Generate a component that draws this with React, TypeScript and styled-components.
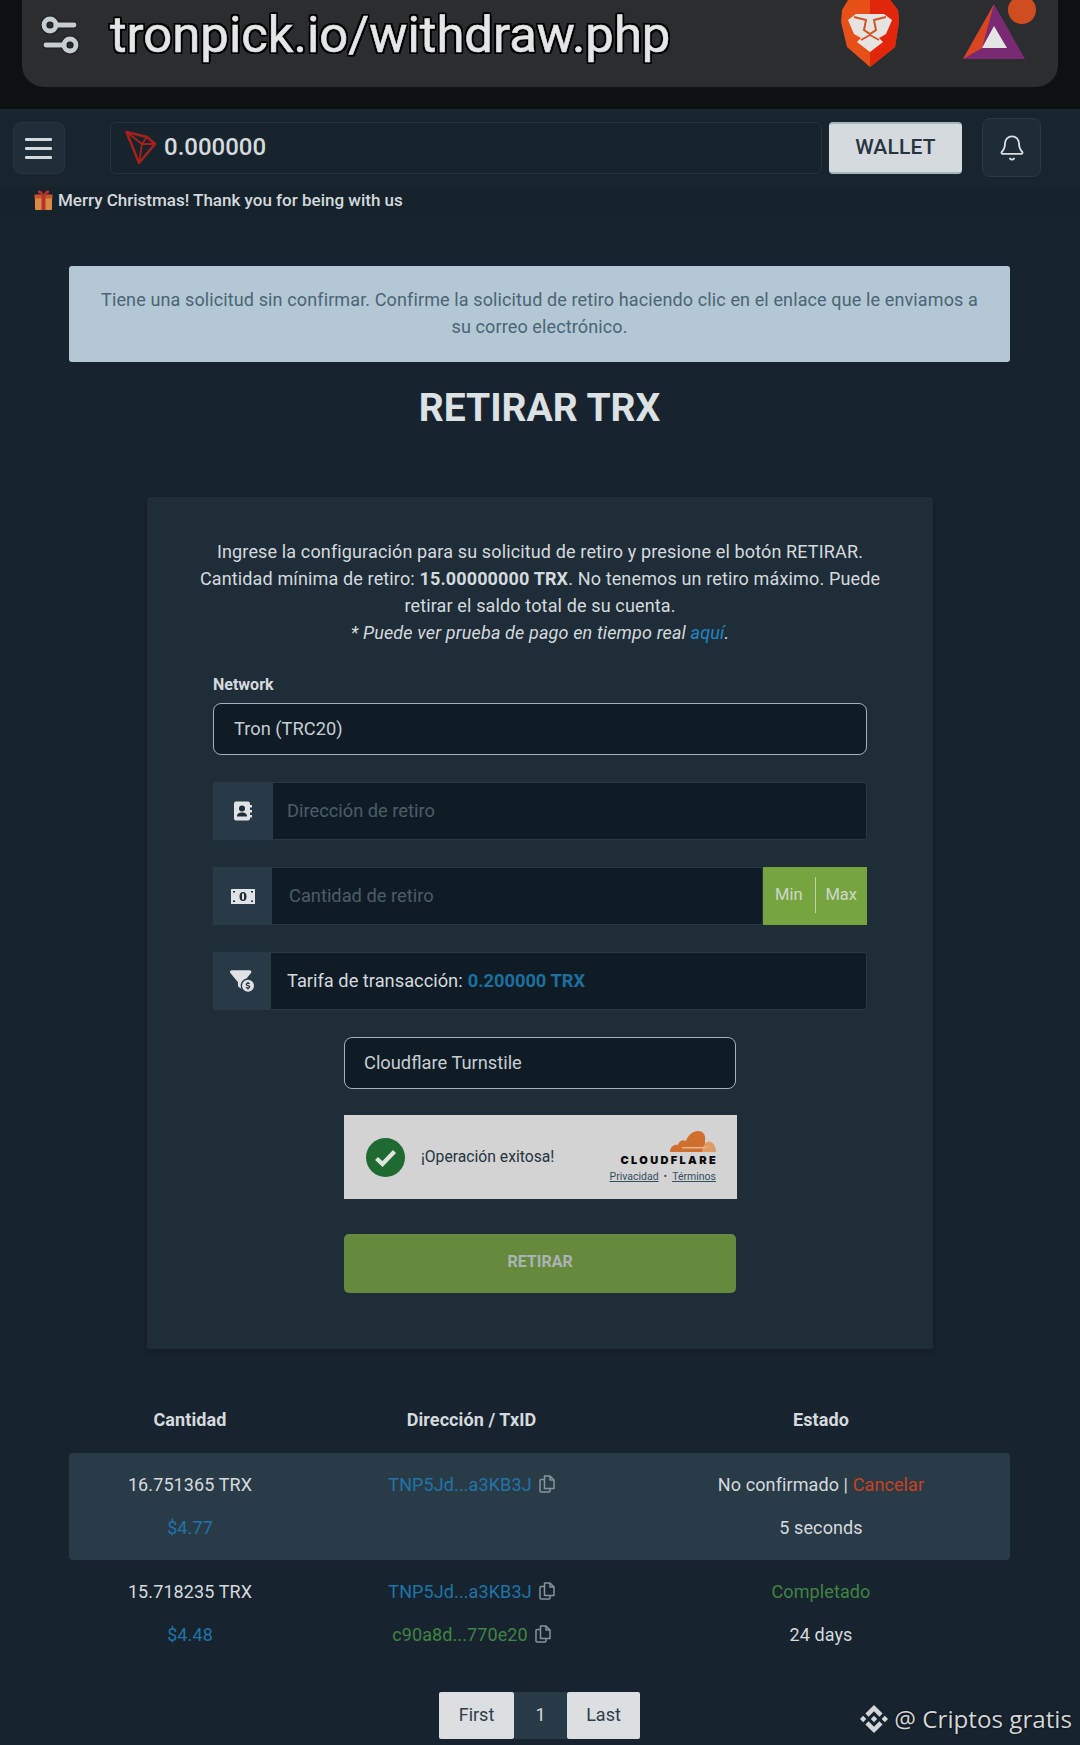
import React from "react";
import styled, { createGlobalStyle } from "styled-components";
import { Bell, Settings2 } from "lucide-react";
import { FaFilterCircleDollar } from "react-icons/fa6";
import { SiBinance } from "react-icons/si";

const Global = createGlobalStyle`
  html, body { margin: 0; padding: 0; background: #17232e; }
  body { font-family: Roboto, "Liberation Sans", sans-serif; color: #d7dde0; width: 1080px; height: 1745px; overflow: hidden; }
  * { box-sizing: border-box; }
`;

const Page = styled.div`
  position: relative;
  width: 1080px;
  height: 1745px;
  overflow: hidden;
  background: #17232e;
`;

const BrowserBar = styled.header`
  height: 109px;
  background: #0e1111;
  padding: 0 22px 22px;
`;
const UrlPill = styled.div`
  height: 87px;
  background: #2c2d30;
  border-radius: 0 0 22px 22px;
  display: flex;
  align-items: center;
  padding: 0 16px 18px 14px;
`;
const UrlSettings = styled.span`
  display: flex;
  color: #c6ced2;
  margin-right: 26px;
  filter: drop-shadow(0 0 1px #000);
`;
const UrlText = styled.div`
  font-size: 50.8px;
  color: #e3e5e6;
  -webkit-text-stroke: 0.6px #e3e5e6;
  text-shadow: -2px 0 #000, 2px 0 #000, 0 -2px #000, 0 2px #000, -2px -2px #000, 2px 2px #000, -2px 2px #000, 2px -2px #000;
  flex: 1;
  line-height: 60px;
`;
const BraveLogo = styled.svg`
  width: 60px;
  height: 68px;
  align-self: flex-start;
`;
const BatLogo = styled.svg`
  width: 76px;
  height: 62px;
  margin-left: 63px;
  margin-right: 3px;
  align-self: flex-start;
`;

const NavBar = styled.nav`
  height: 78px;
  display: flex;
  align-items: flex-start;
  padding: 13px 39px 0 13px;
  background: #18252f;
`;
const HamburgerButton = styled.button`
  width: 52px;
  height: 52px;
  border-radius: 8px;
  border: 1px solid #25343f;
  background: #1f2e39;
  padding: 0 2px 0 0;
  display: flex;
  flex-direction: column;
  justify-content: center;
  align-items: center;
  gap: 6px;
`;
const HamburgerLine = styled.span`
  display: block;
  width: 27px;
  height: 3px;
  border-radius: 1px;
  background: #d3d9dc;
`;
const BalanceBox = styled.div`
  width: 712px;
  height: 52px;
  margin-left: 45px;
  border: 1px solid #223240;
  border-radius: 6px;
  background: #17242e;
  display: flex;
  align-items: center;
  padding: 0 0 2px 14px;
  gap: 7px;
  font-size: 24px;
  font-weight: 500;
  color: #d5dade;
`;
const WalletButton = styled.button`
  width: 133px;
  height: 52px;
  margin-left: 7px;
  border: 0;
  border-top: 2px solid #a9b5bc;
  border-bottom: 2px solid #a9b5bc;
  border-radius: 4px;
  background: #d4dade;
  color: #26343f;
  font: 500 21px Roboto, sans-serif;
  letter-spacing: 0.2px;
  padding: 0 0 2px;
`;
const BellButton = styled.button`
  width: 59px;
  height: 59px;
  margin: -4px 0 0 20px;
  border: 1px solid #2a3a45;
  border-radius: 8px;
  background: #1e2c37;
  color: #d9dee1;
  display: flex;
  align-items: center;
  justify-content: center;
  padding: 0;
`;

const Ticker = styled.div`
  height: 30px;
  padding: 0 0 5px 34px;
  display: flex;
  align-items: center;
  gap: 5px;
  font-size: 17px;
  font-weight: 500;
  color: #d3d9dc;
  background: #16232d;
`;

const Main = styled.main`
  padding: 49px 70px 0 69px;
  display: flex;
  flex-direction: column;
`;
const Alert = styled.div`
  height: 96px;
  background: #b3c8d4;
  border-radius: 3px;
  color: #4a6575;
  font-size: 18px;
  line-height: 27px;
  text-align: center;
  padding: 20px 24px 0;
  letter-spacing: 0.12px;
`;
const Title = styled.h1`
  margin: 23px 0 0;
  font-size: 39px;
  line-height: 46px;
  font-weight: 700;
  text-align: center;
  color: #dce1e3;
`;
const Card = styled.section`
  width: 786px;
  height: 852px;
  margin: 66px 0 0 78px;
  background: #1e2d38;
  border-radius: 3px;
  box-shadow: 0 2px 6px rgba(0, 0, 0, 0.2);
  padding: 41px 66px 0;
  display: flex;
  flex-direction: column;
`;
const Intro = styled.p`
  margin: 0 -18px;
  font-size: 18px;
  line-height: 27px;
  letter-spacing: 0.14px;
  text-align: center;
  color: #d5dade;
  strong { font-weight: 700; }
  em { font-style: italic; }
  a { color: #1f86c0; text-decoration: none; }
`;
const FieldLabel = styled.label`
  margin-top: 27px;
  font-size: 16px;
  line-height: 24px;
  font-weight: 700;
  color: #d5dade;
`;
const SelectBox = styled.div<{ $narrow?: boolean }>`
  margin-top: ${(p) => (p.$narrow ? "0" : "6px")};
  width: ${(p) => (p.$narrow ? "392px" : "654px")};
  align-self: center;
  height: 52px;
  border: 1px solid #a7b2b8;
  border-radius: 8px;
  background: #0f1c26;
  display: flex;
  align-items: center;
  padding: 0 0 2px ${(p) => (p.$narrow ? "19px" : "20px")};
  font-size: 18.3px;
  color: #c6ced3;
`;
const InputGroup = styled.div`
  margin-top: 27px;
  height: 58px;
  display: flex;
`;
const Addon = styled.span<{ $w: number }>`
  flex: 0 0 ${(p) => p.$w}px;
  background: #293a47;
  display: flex;
  align-items: center;
  justify-content: center;
  color: #dfe3e5;
`;
const InputCell = styled.div<{ $pad: number }>`
  flex: 1;
  background: #0f1c26;
  border: 1px solid #263844;
  border-left: 0;
  border-radius: 0 3px 3px 0;
  display: flex;
  align-items: center;
  padding: 0 0 2px ${(p) => p.$pad}px;
  font-size: 18.3px;
  color: #4d5c66;
  strong { color: #1d6f9f; font-weight: 700; margin-left: 5px; }
`;
const FeeText = styled.span`
  color: #d5dade;
  display: flex;
`;
const MinMax = styled.div`
  flex: 0 0 104px;
  background: #76a540;
  display: flex;
  align-items: center;
  color: #cfd6cf;
  font-size: 16.5px;
  padding-bottom: 2px;
`;
const MinMaxItem = styled.span<{ $first?: boolean }>`
  flex: 1;
  text-align: center;
  line-height: 36px;
  border-right: ${(p) => (p.$first ? "1px solid #c2d0ae" : "0")};
`;
const NarrowBlock = styled.div<{ $gap: number }>`
  margin-top: ${(p) => p.$gap}px;
  width: 392px;
  align-self: center;
`;
const Turnstile = styled.div`
  width: 393px;
  height: 84px;
  background: #d3d3d3;
  display: flex;
  align-items: center;
  padding-left: 22px;
`;
const CheckCircle = styled.svg`
  width: 39px;
  height: 39px;
  flex: none;
`;
const TurnstileText = styled.span`
  margin: 0 0 2px 16px;
  font-size: 15.7px;
  color: #25343f;
`;
const CfBrand = styled.div`
  margin-left: auto;
  margin-right: 21px;
  display: flex;
  flex-direction: column;
  align-items: flex-end;
`;
const CfWord = styled.span`
  font: 900 11px Inter, "Liberation Sans", sans-serif;
  letter-spacing: 2.35px;
  margin-right: -2px;
  color: #0a0a0a;
  line-height: 14px;
`;
const CfLinks = styled.span`
  margin-top: 3px;
  font-size: 10.5px;
  line-height: 13px;
  color: #34505f;
  display: flex;
  gap: 5px;
  u { text-decoration: underline; }
`;
const SubmitButton = styled.button`
  width: 392px;
  height: 59px;
  border: 0;
  border-radius: 5px;
  background: #668a3d;
  color: #aab3b5;
  font: 700 16px Roboto, sans-serif;
  padding: 0 0 5px;
`;

const TableHead = styled.div`
  margin-top: 57px;
  display: grid;
  grid-template-columns: 242px 321px 378px;
  font-size: 18px;
  line-height: 28px;
  font-weight: 700;
  letter-spacing: 0.1px;
  text-align: center;
  color: #d5dade;
`;
const TableRow = styled.div<{ $shaded?: boolean }>`
  margin-top: ${(p) => (p.$shaded ? "19px" : "0")};
  height: 107px;
  display: grid;
  grid-template-columns: 242px 321px 378px;
  background: ${(p) => (p.$shaded ? "#2a3b48" : "transparent")};
  border-radius: 4px;
  text-align: center;
  font-size: 18px;
  letter-spacing: 0.1px;
`;
const Cell = styled.div`
  padding-top: 19px;
  display: flex;
  flex-direction: column;
  align-items: center;
  gap: 17px;
  & > * { line-height: 26px; height: 26px; }
`;
const Blue = styled.span`
  color: #1f74a8;
  display: inline-flex;
  align-items: center;
  gap: 7px;
`;
const Green = styled.span`
  color: #3f8543;
  display: inline-flex;
  align-items: center;
  gap: 7px;
`;
const Plain = styled.span`
  color: #d5dade;
`;
const Cancel = styled.span`
  color: #c9411f;
`;
const CopySvg = styled.svg`
  width: 16px;
  height: 18px;
  margin-top: -2px;
`;
const Pager = styled.div`
  margin: 25px 0 0 370px;
  width: 201px;
  height: 47px;
  display: flex;
  font-size: 18px;
`;
const PageItem = styled.span<{ $active?: boolean; $w: number }>`
  width: ${(p) => p.$w}px;
  display: flex;
  align-items: center;
  justify-content: center;
  padding-bottom: 2px;
  color: ${(p) => (p.$active ? "#d5dade" : "#2e3d48")};
  background: ${(p) => (p.$active ? "#293a47" : "#dbdfe2")};
  border-radius: ${(p) => (p.$active ? "0" : "2px")};
`;
const Watermark = styled.div`
  position: absolute;
  right: 8px;
  top: 1702px;
  display: flex;
  align-items: center;
  gap: 6px;
  font: 24.2px "Open Sans", "DejaVu Sans", sans-serif;
  color: #d3d7d9;
  text-shadow: 0 0 2px #000;
`;

const Tron = () => (
  <svg width="32" height="34" viewBox="0 0 32 34" fill="none" stroke="#a8201c" strokeWidth="2.4" strokeLinejoin="round">
    <path d="M1.5 2 L22 7 L30 14 L14 33 Z" />
    <path d="M1.5 2 L17 14 L14 33 M17 14 L30 14 M17 14 L22 7" strokeWidth="1.8" />
  </svg>
);

const Gift = () => (
  <svg width="19" height="20" viewBox="0 0 19 20">
    <rect x="1" y="6" width="17" height="14" rx="1" fill="#d98a44" />
    <rect x="0.5" y="4.5" width="18" height="4" fill="#c5572c" />
    <rect x="7.5" y="4" width="4" height="16" fill="#b8322a" />
    <path d="M9.5 4.5 C5 4.5 3 2.5 4 1 C5.5-.5 8.5 1.5 9.5 4.5 C10.5 1.5 13.5-.5 15 1 C16 2.5 14 4.5 9.5 4.5Z" fill="#b8322a" />
  </svg>
);

const Cloud = () => (
  <svg width="46" height="22" viewBox="0 0 46 22">
    <path d="M0 21 C0 15 5 13 8 14 C9 10 13 8 16 10 C18 4 23 0 28 0 C33 0 36 4 35 9 L35 21 Z" fill="#cf6f2e" />
    <path d="M32 21 C33 13 37 9 41 11 C44 12 46 17 46 21 Z" fill="#e09a63" />
    <path d="M12 16 L34 16 L41 15 L34 17.5 L12 17.5 Z" fill="#e5b48f" />
  </svg>
);

const CopyGlyph = () => (
  <CopySvg viewBox="0 0 16 18" fill="none" stroke="#87949c" strokeWidth="1.5" strokeLinejoin="round">
    <path d="M5.5 1 H11 L15 5 V13.5 H5.5 Z" />
    <path d="M11 1 V5 H15" />
    <path d="M5.5 4.5 H2 A1 1 0 0 0 1 5.5 V16 A1 1 0 0 0 2 17 H10 A1 1 0 0 0 11 16 V13.5" />
  </CopySvg>
);

const AddressBook = () => (
  <svg width="18" height="20" viewBox="0 0 18 20">
    <rect x="0" y="0.5" width="16" height="19" rx="2" fill="#dfe3e5" />
    <path d="M16 4 h2 v2.5 h-2z M16 9 h2 v2.5 h-2z M16 14 h2 v2.5 h-2z" fill="#dfe3e5" />
    <circle cx="8" cy="7.5" r="3" fill="#1e2d38" />
    <path d="M3 15.5 C3 12.5 5 11.5 8 11.5 C11 11.5 13 12.5 13 15.5 Z" fill="#1e2d38" />
  </svg>
);

const MoneyBill = () => (
  <svg width="24" height="15" viewBox="0 0 24 15">
    <rect x="0" y="0" width="24" height="15" rx="0.5" fill="#dfe3e5" />
    <ellipse cx="12" cy="7.5" rx="3.5" ry="4.5" fill="#1e2d38" />
    <rect x="11" y="4.5" width="2" height="6" fill="#dfe3e5" />
    <path d="M2 2 h2 v1.5 h-2z M20 2 h2 v1.5 h-2z M2 11.5 h2 v1.5 h-2z M20 11.5 h2 v1.5 h-2z" fill="#1e2d38" />
  </svg>
);

const SuccessMark = () => (
  <CheckCircle viewBox="0 0 39 39">
    <circle cx="19.5" cy="19.5" r="19.5" fill="#1f6a30" />
    <path d="M10.5 20.5 L16.5 26 L28.5 13.5" fill="none" stroke="#dfe6e0" strokeWidth="4.2" strokeLinejoin="miter" />
  </CheckCircle>
);

export default function App() {
  return (
    <Page>
      <Global />
      <BrowserBar>
        <UrlPill>
          <UrlSettings>
            <Settings2 size={48} strokeWidth={2.4} />
          </UrlSettings>
          <UrlText>tronpick.io/withdraw.php</UrlText>
          <BraveLogo viewBox="0 0 60 68">
            <path d="M8 0 L50 0 L58 10 L59 22 L55 47 L30 67 L7 47 L1 22 L2 10 Z" fill="#e8501a" />
            <path d="M30 0 L50 0 L58 10 L59 22 L55 47 L30 67 Z" fill="#e2260a" />
            <path d="M8 20 L16 14 L44 14 L52 20 L46 34 L39 38 L43 42 L30 52 L17 42 L21 38 L14 34 Z" fill="#e6e3e0" />
            <path d="M14 17 L26 20 L24 30 L30 34 L36 30 L34 20 L46 17" fill="none" stroke="#cf5525" strokeWidth="2" />
            <path d="M21 40 L30 35 L39 40" fill="none" stroke="#cf5525" strokeWidth="1.6" />
          </BraveLogo>
          <BatLogo viewBox="0 0 76 62">
            <path d="M31 4 L0 59 L62 59 Z" fill="#7a2a72" />
            <path d="M31 4 L0 59 L19 48 Z" fill="#d9451e" />
            <path d="M31 26 L44 48 L19 48 Z" fill="#e4e4e4" />
            <circle cx="59" cy="10" r="14" fill="#cf4d20" />
          </BatLogo>
        </UrlPill>
      </BrowserBar>

      <NavBar>
        <HamburgerButton aria-label="menu">
          <HamburgerLine />
          <HamburgerLine />
          <HamburgerLine />
        </HamburgerButton>
        <BalanceBox>
          <Tron />
          0.000000
        </BalanceBox>
        <WalletButton>WALLET</WalletButton>
        <BellButton aria-label="notifications">
          <Bell size={28} strokeWidth={1.6} />
        </BellButton>
      </NavBar>

      <Ticker>
        <Gift />
        Merry Christmas! Thank you for being with us
      </Ticker>

      <Main>
        <Alert>
          Tiene una solicitud sin confirmar. Confirme la solicitud de retiro haciendo clic en el enlace que le enviamos a su correo electrónico.
        </Alert>
        <Title>RETIRAR TRX</Title>
        <Card>
          <Intro>
            Ingrese la configuración para su solicitud de retiro y presione el botón RETIRAR.
            <br />
            Cantidad mínima de retiro: <strong>15.00000000 TRX</strong>. No tenemos un retiro máximo. Puede retirar el saldo total de su cuenta.
            <br />
            <em>
              * Puede ver prueba de pago en tiempo real <a href="#aqui">aquí</a>.
            </em>
          </Intro>
          <FieldLabel>Network</FieldLabel>
          <SelectBox>Tron (TRC20)</SelectBox>
          <InputGroup>
            <Addon $w={60}>
              <AddressBook />
            </Addon>
            <InputCell $pad={14}>Dirección de retiro</InputCell>
          </InputGroup>
          <InputGroup>
            <Addon $w={59}>
              <MoneyBill />
            </Addon>
            <InputCell $pad={17}>Cantidad de retiro</InputCell>
            <MinMax>
              <MinMaxItem $first>Min</MinMaxItem>
              <MinMaxItem>Max</MinMaxItem>
            </MinMax>
          </InputGroup>
          <InputGroup>
            <Addon $w={58}>
              <FaFilterCircleDollar size={24} />
            </Addon>
            <InputCell $pad={16}>
              <FeeText>
                Tarifa de transacción:<strong>0.200000 TRX</strong>
              </FeeText>
            </InputCell>
          </InputGroup>
          <NarrowBlock $gap={27}>
            <SelectBox $narrow>Cloudflare Turnstile</SelectBox>
          </NarrowBlock>
          <NarrowBlock $gap={26}>
            <Turnstile>
              <SuccessMark />
              <TurnstileText>¡Operación exitosa!</TurnstileText>
              <CfBrand>
                <Cloud />
                <CfWord>CLOUDFLARE</CfWord>
                <CfLinks>
                  <u>Privacidad</u>
                  <span>•</span>
                  <u>Términos</u>
                </CfLinks>
              </CfBrand>
            </Turnstile>
          </NarrowBlock>
          <NarrowBlock $gap={35}>
            <SubmitButton>RETIRAR</SubmitButton>
          </NarrowBlock>
        </Card>

        <TableHead>
          <span>Cantidad</span>
          <span>Dirección / TxID</span>
          <span>Estado</span>
        </TableHead>
        <TableRow $shaded>
          <Cell>
            <Plain>16.751365 TRX</Plain>
            <Blue>$4.77</Blue>
          </Cell>
          <Cell>
            <Blue>
              TNP5Jd...a3KB3J <CopyGlyph />
            </Blue>
          </Cell>
          <Cell>
            <Plain>
              No confirmado | <Cancel>Cancelar</Cancel>
            </Plain>
            <Plain>5 seconds</Plain>
          </Cell>
        </TableRow>
        <TableRow>
          <Cell>
            <Plain>15.718235 TRX</Plain>
            <Blue>$4.48</Blue>
          </Cell>
          <Cell>
            <Blue>
              TNP5Jd...a3KB3J <CopyGlyph />
            </Blue>
            <Green>
              c90a8d...770e20 <CopyGlyph />
            </Green>
          </Cell>
          <Cell>
            <Green>Completado</Green>
            <Plain>24 days</Plain>
          </Cell>
        </TableRow>
        <Pager>
          <PageItem $w={75}>First</PageItem>
          <PageItem $w={53} $active>
            1
          </PageItem>
          <PageItem $w={73}>Last</PageItem>
        </Pager>
      </Main>
      <Watermark>
        <SiBinance size={28} />@ Criptos gratis
      </Watermark>
    </Page>
  );
}
